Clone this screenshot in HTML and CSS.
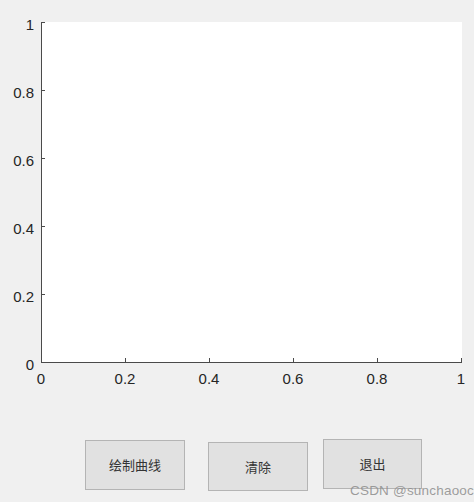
FILE: index.html
```html
<!DOCTYPE html>
<html lang="zh">
<head>
<meta charset="utf-8">
<link rel="stylesheet" href="styles.css">
</head>
<body>
<div class="figure">
  <svg class="axes" width="474" height="400" viewBox="0 0 474 400">
    <rect x="41" y="22" width="421" height="340" fill="#ffffff"/>
    <g stroke="#4a4a4a" stroke-width="1" fill="none">
      <line x1="41.5" y1="22" x2="41.5" y2="363"/>
      <line x1="41" y1="362.5" x2="462" y2="362.5"/>
      <line x1="41" y1="22.5" x2="45" y2="22.5"/>
      <line x1="41" y1="90.5" x2="45" y2="90.5"/>
      <line x1="41" y1="158.5" x2="45" y2="158.5"/>
      <line x1="41" y1="226.5" x2="45" y2="226.5"/>
      <line x1="41" y1="294.5" x2="45" y2="294.5"/>
      <line x1="125.5" y1="362" x2="125.5" y2="358"/>
      <line x1="209.5" y1="362" x2="209.5" y2="358"/>
      <line x1="293.5" y1="362" x2="293.5" y2="358"/>
      <line x1="377.5" y1="362" x2="377.5" y2="358"/>
      <line x1="461.5" y1="362" x2="461.5" y2="358"/>
    </g>
    <g class="ticklabel" text-anchor="end">
      <text x="34" y="29.5">1</text>
      <text x="34" y="97.5">0.8</text>
      <text x="34" y="165.5">0.6</text>
      <text x="34" y="233.5">0.4</text>
      <text x="34" y="301.5">0.2</text>
      <text x="34" y="369.5">0</text>
    </g>
    <g class="ticklabel" text-anchor="middle">
      <text x="41" y="384">0</text>
      <text x="125" y="384">0.2</text>
      <text x="209" y="384">0.4</text>
      <text x="293" y="384">0.6</text>
      <text x="377" y="384">0.8</text>
      <text x="461" y="384">1</text>
    </g>
  </svg>
  <div class="controls">
    <button class="btn btn-plot">绘制曲线</button>
    <button class="btn btn-clear">清除</button>
    <button class="btn btn-exit">退出</button>
  </div>
  <div class="watermark">CSDN @sunchaooc</div>
</div>
</body>
</html>
```
FILE: styles.css
```css
html, body {
  margin: 0;
  padding: 0;
  background: #f0f0f0;
}
.figure {
  position: relative;
  width: 474px;
  height: 502px;
  overflow: hidden;
  background: #f0f0f0;
  font-family: "Liberation Sans", Arial, sans-serif;
}
.axes {
  display: block;
}
.ticklabel {
  font-family: "Liberation Sans", Arial, sans-serif;
  font-size: 15px;
  fill: #262626;
}
.controls {
  display: flex;
  align-items: flex-start;
  padding-left: 85px;
}
.btn {
  box-sizing: border-box;
  width: 100px;
  height: 50px;
  margin: 0;
  padding: 0;
  background: #e1e1e1;
  border: 1px solid #b4b4b4;
  border-radius: 0;
  color: #333333;
  font-family: "Noto Sans CJK SC", "Noto Sans", sans-serif;
  font-size: 13px;
  line-height: 48px;
  text-align: center;
}
.btn-plot {
  margin-top: 40px;
}
.btn-clear {
  margin-top: 42px;
  margin-left: 23px;
  height: 49px;
}
.btn-exit {
  margin-top: 39px;
  margin-left: 15px;
  width: 99px;
}
.watermark {
  position: absolute;
  left: 350px;
  top: 483px;
  font-family: "Liberation Sans", Arial, sans-serif;
  font-size: 13.5px;
  letter-spacing: 0.2px;
  line-height: 16px;
  color: rgba(140, 140, 140, 0.85);
  white-space: nowrap;
}
```
